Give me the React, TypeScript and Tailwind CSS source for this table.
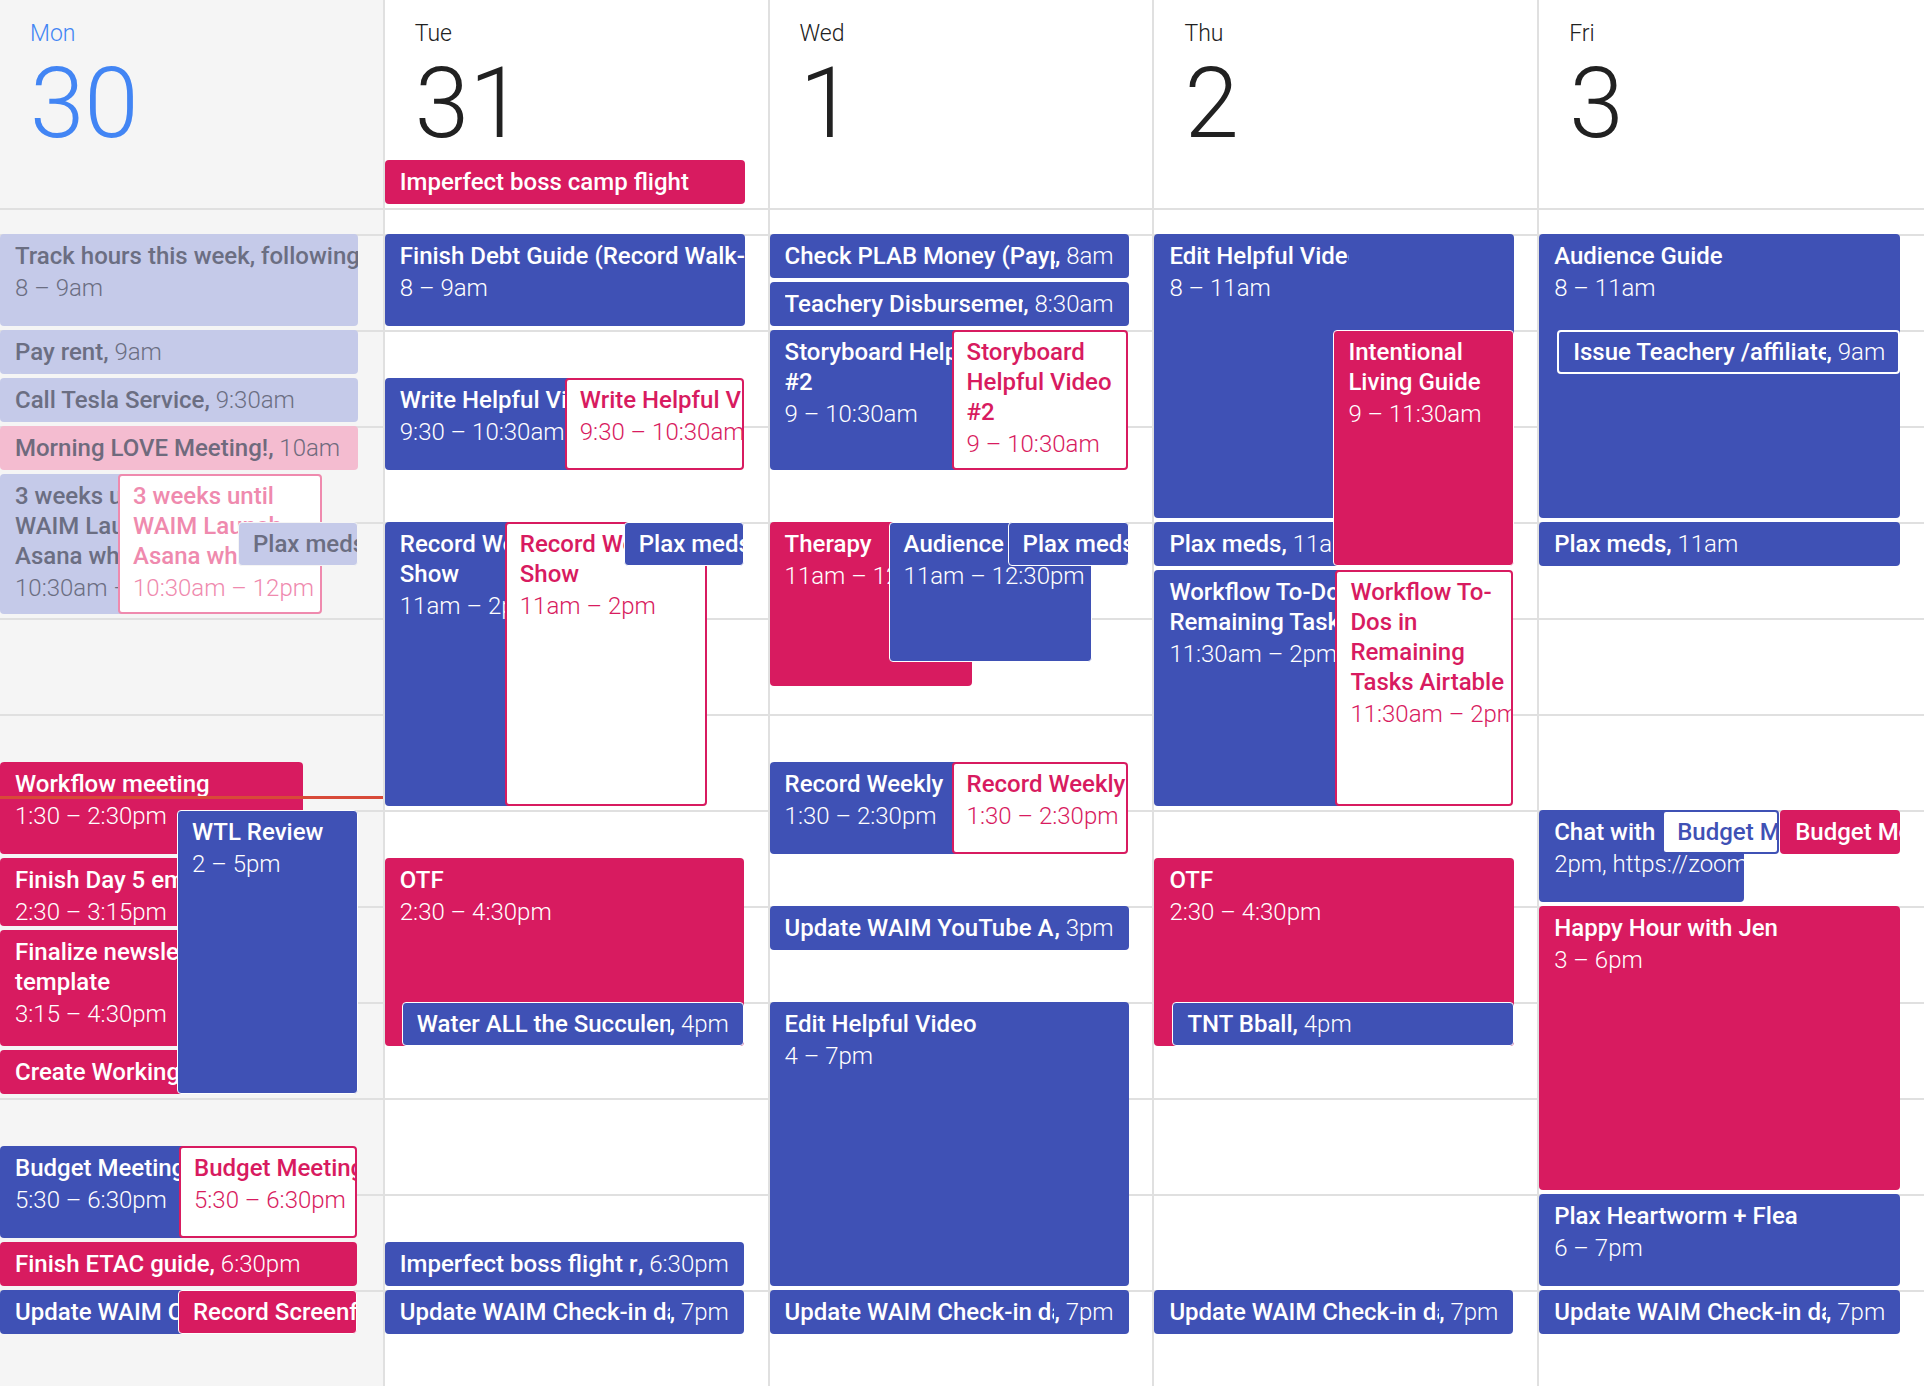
import React from "react";

const H = 96;

type Variant = "blue" | "pink" | "pastBlue" | "pastPink" | "pinkOut" | "blueOut" | "pastPinkOut";

type Ev = {
  s: number;
  e: number;
  l: number;
  w: number;
  v: Variant;
  lines: string[];
  time?: string;
  short?: string;
  ring?: "white" | "white2" | "gray";
  tw?: number;
};

const variantClass: Record<Variant, string> = {
  blue: "bg-[#3f51b5] text-white",
  pink: "bg-[#d81b60] text-white",
  pastBlue: "bg-[#c5cae9] text-[#6b6e82]",
  pastPink: "bg-[#f4bcd0] text-[#6f6a7d]",
  pinkOut: "bg-white border-2 border-[#d81b60] text-[#d81b60]",
  blueOut: "bg-white border-2 border-[#3f51b5] text-[#3f51b5]",
  pastPinkOut: "bg-white border-2 border-[#ef8aae] text-[#ef8aae]",
};

function padClass(ev: Ev) {
  if (ev.v === "pinkOut" || ev.v === "blueOut" || ev.v === "pastPinkOut") return "pl-[13px] pr-[13px] pt-[5px]";
  if (ev.ring === "white2") return "border-2 border-white pl-[14px] pr-[13px] pt-[5px]";
  if (ev.ring === "white") return "border border-white pl-[14px] pr-[14px] pt-[6px]";
  if (ev.ring === "gray") return "border border-[#f5f5f5] pl-[14px] pr-[14px] pt-[6px]";
  return "pl-[15px] pr-[15px] pt-[7px]";
}

const days: { name: string; num: string; today?: boolean; allDay?: string; events: Ev[] }[] = [
  {
    name: "Mon",
    num: "30",
    today: true,
    events: [
      { s: 8, e: 9, l: 0, w: 358, v: "pastBlue", lines: ["Track hours this week, following up"], time: "8 – 9am" },
      { s: 9, e: 9.5, l: 0, w: 358, v: "pastBlue", lines: ["Pay rent"], short: "9am" },
      { s: 9.5, e: 10, l: 0, w: 358, v: "pastBlue", lines: ["Call Tesla Service"], short: "9:30am" },
      { s: 10, e: 10.5, l: 0, w: 358, v: "pastPink", lines: ["Morning LOVE Meeting!"], short: "10am" },
      { s: 10.5, e: 12, l: 0, w: 204, v: "pastBlue", lines: ["3 weeks until", "WAIM Launch", "Asana what's next"], time: "10:30am – 12pm" },
      { s: 10.5, e: 12, l: 118, w: 204, v: "pastPinkOut", lines: ["3 weeks until", "WAIM Launch", "Asana what's next"], time: "10:30am – 12pm" },
      { s: 11, e: 11.5, l: 238, w: 120, v: "pastBlue", ring: "gray", lines: ["Plax meds"] },
      { s: 13.5, e: 14.5, l: 0, w: 303, v: "pink", lines: ["Workflow meeting"], time: "1:30 – 2:30pm" },
      { s: 14.5, e: 15.25, l: 0, w: 303, v: "pink", lines: ["Finish Day 5 email"], time: "2:30 – 3:15pm" },
      { s: 15.25, e: 16.5, l: 0, w: 303, v: "pink", lines: ["Finalize newsletter", "template"], time: "3:15 – 4:30pm" },
      { s: 16.5, e: 17, l: 0, w: 303, v: "pink", lines: ["Create Working Session"], short: "4:30pm" },
      { s: 14, e: 17, l: 177, w: 181, v: "blue", ring: "white", lines: ["WTL Review"], time: "2 – 5pm" },
      { s: 17.5, e: 18.5, l: 0, w: 300, v: "blue", lines: ["Budget Meeting"], time: "5:30 – 6:30pm" },
      { s: 17.5, e: 18.5, l: 179, w: 178, v: "pinkOut", lines: ["Budget Meeting"], time: "5:30 – 6:30pm" },
      { s: 18.5, e: 19, l: 0, w: 357, v: "pink", lines: ["Finish ETAC guide"], short: "6:30pm" },
      { s: 19, e: 19.5, l: 0, w: 300, v: "blue", lines: ["Update WAIM Check-in daily"], short: "7pm" },
      { s: 19, e: 19.5, l: 178, w: 179, v: "pink", ring: "white", lines: ["Record Screenflow"] },
    ],
  },
  {
    name: "Tue",
    num: "31",
    allDay: "Imperfect boss camp flight",
    events: [
      { s: 8, e: 9, l: 0, w: 360, v: "blue", lines: ["Finish Debt Guide (Record Walk-through)"], time: "8 – 9am" },
      { s: 9.5, e: 10.5, l: 0, w: 300, v: "blue", lines: ["Write Helpful Video"], time: "9:30 – 10:30am" },
      { s: 9.5, e: 10.5, l: 180, w: 179, v: "pinkOut", lines: ["Write Helpful Video"], time: "9:30 – 10:30am" },
      { s: 11, e: 14, l: 0, w: 300, v: "blue", lines: ["Record Weekly", "Show"], time: "11am – 2pm" },
      { s: 11, e: 14, l: 120, w: 202, v: "pinkOut", lines: ["Record Weekly", "Show"], time: "11am – 2pm" },
      { s: 11, e: 11.5, l: 239, w: 120, v: "blue", ring: "white", lines: ["Plax meds"] },
      { s: 14.5, e: 16.5, l: 0, w: 359, v: "pink", lines: ["OTF"], time: "2:30 – 4:30pm" },
      { s: 16, e: 16.5, l: 17, w: 342, v: "blue", ring: "white", lines: ["Water ALL the Succulents"], short: "4pm" },
      { s: 18.5, e: 19, l: 0, w: 359, v: "blue", lines: ["Imperfect boss flight return"], short: "6:30pm" },
      { s: 19, e: 19.5, l: 0, w: 359, v: "blue", lines: ["Update WAIM Check-in daily"], short: "7pm" },
    ],
  },
  {
    name: "Wed",
    num: "1",
    events: [
      { s: 8, e: 8.5, l: 0, w: 359, v: "blue", lines: ["Check PLAB Money (Paypal)"], short: "8am" },
      { s: 8.5, e: 9, l: 0, w: 359, v: "blue", lines: ["Teachery Disbursement"], short: "8:30am" },
      { s: 9, e: 10.5, l: 0, w: 300, v: "blue", lines: ["Storyboard Helpful Video", "#2"], time: "9 – 10:30am" },
      { s: 9, e: 10.5, l: 182, w: 176, v: "pinkOut", lines: ["Storyboard", "Helpful Video", "#2"], time: "9 – 10:30am" },
      { s: 11, e: 12.75, l: 0, w: 202, v: "pink", lines: ["Therapy"], time: "11am – 12:45pm" },
      { s: 11, e: 12.5, l: 119, w: 203, v: "blue", ring: "white", lines: ["Audience Guide"], time: "11am – 12:30pm" },
      { s: 11, e: 11.5, l: 238, w: 121, v: "blue", ring: "white", lines: ["Plax meds"] },
      { s: 13.5, e: 14.5, l: 0, w: 300, v: "blue", lines: ["Record Weekly"], time: "1:30 – 2:30pm" },
      { s: 13.5, e: 14.5, l: 182, w: 176, v: "pinkOut", lines: ["Record Weekly"], time: "1:30 – 2:30pm" },
      { s: 15, e: 15.5, l: 0, w: 359, v: "blue", lines: ["Update WAIM YouTube Analytics"], short: "3pm" },
      { s: 16, e: 19, l: 0, w: 359, v: "blue", lines: ["Edit Helpful Video"], time: "4 – 7pm" },
      { s: 19, e: 19.5, l: 0, w: 359, v: "blue", lines: ["Update WAIM Check-in daily"], short: "7pm" },
    ],
  },
  {
    name: "Thu",
    num: "2",
    events: [
      { s: 8, e: 11, l: 0, w: 360, v: "blue", lines: ["Edit Helpful Video"], time: "8 – 11am", tw: 195 },
      { s: 11, e: 11.5, l: 0, w: 300, v: "blue", lines: ["Plax meds"], short: "11am" },
      { s: 9, e: 11.5, l: 179, w: 181, v: "pink", ring: "white", lines: ["Intentional", "Living Guide"], time: "9 – 11:30am" },
      { s: 11.5, e: 14, l: 0, w: 300, v: "blue", lines: ["Workflow To-Dos in", "Remaining Tasks Airtable"], time: "11:30am – 2pm" },
      { s: 11.5, e: 14, l: 181, w: 178, v: "pinkOut", lines: ["Workflow To-", "Dos in", "Remaining", "Tasks Airtable"], time: "11:30am – 2pm" },
      { s: 14.5, e: 16.5, l: 0, w: 360, v: "pink", lines: ["OTF"], time: "2:30 – 4:30pm" },
      { s: 16, e: 16.5, l: 18, w: 342, v: "blue", ring: "white", lines: ["TNT Bball"], short: "4pm" },
      { s: 19, e: 19.5, l: 0, w: 359, v: "blue", lines: ["Update WAIM Check-in daily"], short: "7pm" },
    ],
  },
  {
    name: "Fri",
    num: "3",
    events: [
      { s: 8, e: 11, l: 0, w: 361, v: "blue", lines: ["Audience Guide"], time: "8 – 11am" },
      { s: 9, e: 9.5, l: 18, w: 343, v: "blue", ring: "white2", lines: ["Issue Teachery /affiliates"], short: "9am" },
      { s: 11, e: 11.5, l: 0, w: 361, v: "blue", lines: ["Plax meds"], short: "11am" },
      { s: 14, e: 15, l: 0, w: 205, v: "blue", lines: ["Chat with Lauren"], time: "2pm, https://zoom.us/j/5551234" },
      { s: 14, e: 14.5, l: 123, w: 117, v: "blueOut", lines: ["Budget Meeting"] },
      { s: 14, e: 14.5, l: 241, w: 120, v: "pink", lines: ["Budget Meeting"] },
      { s: 15, e: 18, l: 0, w: 361, v: "pink", lines: ["Happy Hour with Jen"], time: "3 – 6pm" },
      { s: 18, e: 19, l: 0, w: 361, v: "blue", lines: ["Plax Heartworm + Flea"], time: "6 – 7pm" },
      { s: 19, e: 19.5, l: 0, w: 361, v: "blue", lines: ["Update WAIM Check-in daily"], short: "7pm" },
    ],
  },
];

function EventBox({ ev }: { ev: Ev }) {
  const top = 24 + (ev.s - 8) * H;
  const height = (ev.e - ev.s) * H - 4;
  const cls = `absolute overflow-hidden rounded-[4px] ${variantClass[ev.v]} ${padClass(ev)}`;
  const style: React.CSSProperties = { top, left: ev.l, width: ev.w, height };

  if (ev.lines.length === 1 && !ev.time) {
    return (
      <div className={cls} style={style}>
        <div className="flex h-[30px] whitespace-nowrap text-[24px] leading-[30px]">
          <span className={ev.short ? "min-w-0 overflow-hidden font-medium" : "font-medium"}>{ev.lines[0]}</span>
          {ev.short && (
            <>
              <span className="shrink-0 font-medium">,</span>
              <span className="shrink-0 whitespace-pre font-light"> {ev.short}</span>
            </>
          )}
        </div>
      </div>
    );
  }

  const inner = (
    <>
      {ev.lines.map((ln, i) => (
        <div key={i} className="h-[30px] whitespace-nowrap text-[24px] font-medium leading-[30px]">
          {ln}
        </div>
      ))}
      {ev.time && (
        <div className="mt-[1px] h-[32px] whitespace-nowrap text-[24px] font-light leading-[32px]">{ev.time}</div>
      )}
    </>
  );

  return (
    <div className={cls} style={style}>
      {ev.tw ? (
        <div className="overflow-hidden" style={{ width: ev.tw - 15 }}>
          {inner}
        </div>
      ) : (
        inner
      )}
    </div>
  );
}

export default function App() {
  return (
    <div className="grid h-[1386px] w-[1924px] grid-cols-5 overflow-hidden bg-white [font-family:Roboto,'Noto_Sans',sans-serif]">
      {days.map((d, di) => (
        <div
          key={d.name}
          className={`flex h-[1386px] min-w-0 flex-col ${d.today ? "bg-[#f5f5f5]" : "bg-white"} ${
            di < 4 ? "border-r-2 border-[#e0e0e0]" : ""
          }`}
        >
          <div className="h-[210px] shrink-0 border-b-2 border-[#e0e0e0] pt-[20px]">
            <div className="pl-[30px]">
              <div
                className={`h-[28px] text-[23px] font-light leading-[28px] ${
                  d.today ? "text-[#4285f4]" : "text-[#212121]"
                }`}
              >
                {d.name}
              </div>
              <div
                className={`mt-[7px] h-[98px] text-[98px] font-light leading-[98px] ${
                  d.today ? "text-[#4285f4]" : "text-[#212121]"
                }`}
              >
                {d.num}
              </div>
            </div>
            {d.allDay && (
              <div className="mt-[7px] h-[44px] w-[360px] overflow-hidden whitespace-nowrap rounded-[4px] bg-[#d81b60] pl-[15px] text-[24px] font-medium leading-[44px] text-white">
                {d.allDay}
              </div>
            )}
          </div>
          <div className="relative min-h-0 flex-1 overflow-hidden">
            <div className="pt-[24px]">
              {Array.from({ length: 12 }).map((_, i) => (
                <div key={i} className="h-[96px] border-t-2 border-[#e0e0e0]" />
              ))}
            </div>
            {d.events.map((ev, i) => (
              <EventBox key={i} ev={ev} />
            ))}
            {d.today && <div className="absolute left-0 top-[586px] z-30 h-[3px] w-[385px] bg-[#d84a38]" />}
          </div>
        </div>
      ))}
    </div>
  );
}
